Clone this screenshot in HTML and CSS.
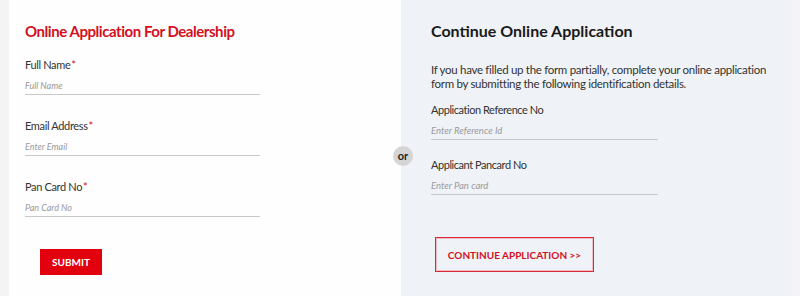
FILE: index.html
```html
<!DOCTYPE html>
<html>
<head>
<meta charset="utf-8">
<link rel="stylesheet" href="styles.css">
</head>
<body>
<div class="page">
  <section class="panel left">
    <h2 class="title red">Online Application For Dealership</h2>
    <div class="field">
      <label class="label">Full Name<span class="req">*</span></label>
      <div class="input">Full Name</div>
    </div>
    <div class="field">
      <label class="label">Email Address<span class="req">*</span></label>
      <div class="input">Enter Email</div>
    </div>
    <div class="field">
      <label class="label">Pan Card No<span class="req">*</span></label>
      <div class="input">Pan Card No</div>
    </div>
    <button class="submit">SUBMIT</button>
  </section>
  <div class="or">or</div>
  <section class="panel right">
    <h2 class="title dark">Continue Online Application</h2>
    <p class="intro">If you have filled up the form partially, complete your online application form by submitting the following identification details.</p>
    <div class="field narrow">
      <label class="label">Application Reference No</label>
      <div class="input">Enter Reference Id</div>
    </div>
    <div class="field narrow">
      <label class="label">Applicant Pancard No</label>
      <div class="input">Enter Pan card</div>
    </div>
    <div class="continue">CONTINUE APPLICATION &gt;&gt;</div>
  </section>
</div>
</body>
</html>
```
FILE: styles.css
```css
* { box-sizing: border-box; }
html, body { margin: 0; padding: 0; }
body {
  background: #f4f4f4;
  font-family: Lato, "Open Sans", sans-serif;
  color: #333;
  width: 800px;
  height: 296px;
  overflow: hidden;
}
.page {
  position: relative;
  display: flex;
  height: 296px;
  padding: 0 8px 0 9px;
}
.panel { height: 296px; }
.left {
  width: 392px;
  background: #fefefe;
  padding: 21px 0 0 16px;
}
.right {
  flex: 1;
  background: #eff2f6;
  padding: 21px 0 0 30px;
}
.title {
  margin: 0;
  font-size: 16px;
  line-height: 20px;
  font-weight: 700;
}
.red {
  color: #d4101e;
  font-size: 15px;
  letter-spacing: -0.45px;
}
.dark { color: #1a1a1a; }
.field {
  width: 235px;
  margin-top: 17px;
}
.left .field + .field { margin-top: 24px; }
.label {
  display: block;
  font-size: 11px;
  line-height: 14px;
  letter-spacing: -0.35px;
  color: #333;
}
.req { color: #d4101e; margin-left: 1px; }
.input {
  margin-top: 8px;
  font-size: 9px;
  font-style: italic;
  color: #9a9a9a;
  line-height: 12px;
  padding-bottom: 2px;
  border-bottom: 1px solid #c8c8c8;
}
.right .input { font-size: 9.5px; }
.submit {
  display: block;
  margin: 32px 0 0 15px;
  width: 62px;
  height: 26px;
  border: none;
  background: #e2000f;
  color: #fff;
  font-family: inherit;
  font-weight: 700;
  font-size: 10px;
  padding: 0;
  cursor: pointer;
}
.intro {
  margin: 22px 0 0 0;
  font-size: 11.5px;
  line-height: 14px;
  letter-spacing: -0.3px;
  color: #333;
  width: 345px;
}
.narrow { width: 227px; }
.right .field { margin-top: 12px; }
.right .label { letter-spacing: -0.45px; }
.right .field + .field { margin-top: 18px; }
.continue {
  display: flex;
  align-items: center;
  justify-content: center;
  margin: 42px 0 0 4px;
  width: 159px;
  height: 35px;
  border-width: 1px;
  border-style: solid;
  border-color: rgb(222, 40, 52);
  box-shadow: inset 0 0 0 1px rgba(222, 40, 52, 0.25);
  color: #d4101e;
  font-weight: 700;
  font-size: 10px;
  cursor: pointer;
}
.or {
  position: absolute;
  left: 393px;
  top: 146px;
  width: 20px;
  height: 20px;
  border-radius: 50%;
  background: #d5d5d5;
  color: #222;
  font-size: 11px;
  font-weight: 700;
  line-height: 19px;
  text-align: center;
  z-index: 2;
}
```
